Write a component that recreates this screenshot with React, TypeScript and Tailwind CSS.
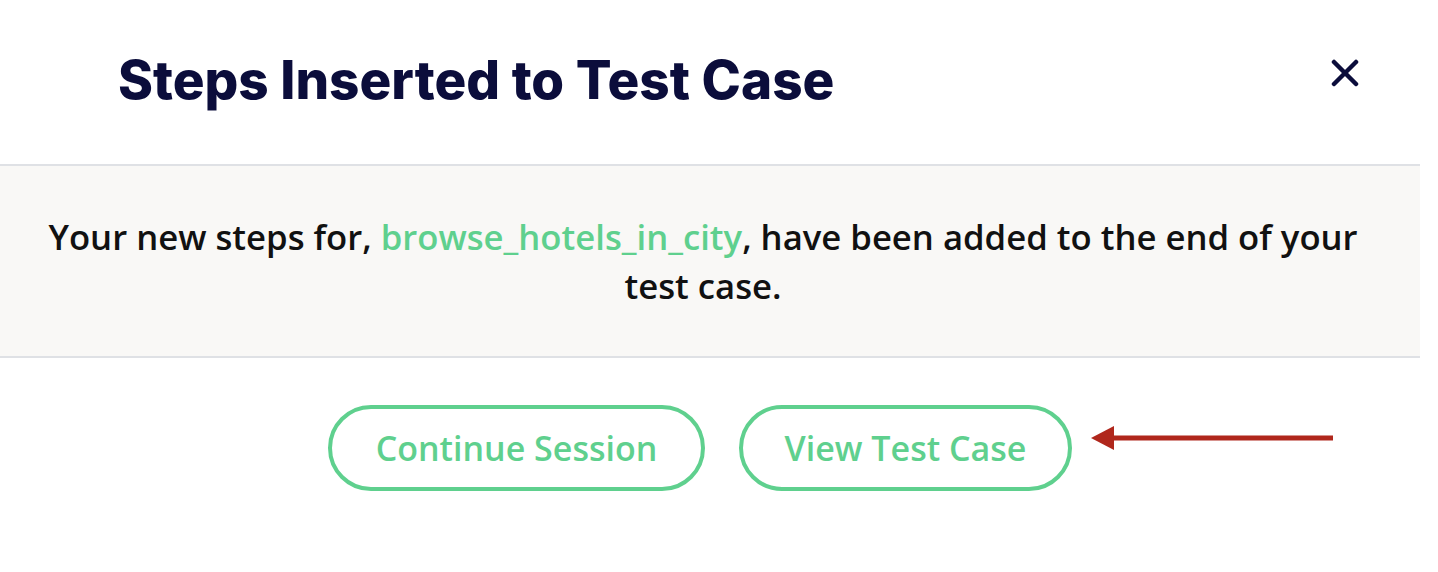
export default function App() {
  return (
    <div className="w-[1438px] h-[572px] bg-white overflow-hidden">
      <div className="w-[1420px]">
        <div className="h-[164px] flex items-start justify-between pl-[118px] pr-[60px]">
          <h1
            className="mt-[44px] text-[53px] leading-[72px] font-extrabold text-[#0b0d3b]"
            style={{ fontFamily: 'Inter, "Noto Sans", sans-serif' }}
          >
            Steps Inserted to Test Case
          </h1>
          <button className="mt-[58px] w-[30px] h-[30px] flex items-center justify-center text-[#0b0d3b]">
            <svg width="28" height="28" viewBox="0 0 28 28" fill="none" stroke="currentColor" strokeWidth="4.5" strokeLinecap="round">
              <line x1="3" y1="3" x2="25" y2="25" />
              <line x1="25" y1="3" x2="3" y2="25" />
            </svg>
          </button>
        </div>
        <div className="h-[194px] bg-[#f9f8f6] border-y-2 border-[#dfe1e5] flex items-center justify-center pl-2 pr-[22px]">
          <p
            className="text-center text-[34.7px] leading-[49px] font-semibold text-[#111111]"
            style={{ fontFamily: '"Open Sans", sans-serif' }}
          >
            Your new steps for, <span className="text-[#5fd08e]">browse_hotels_in_city</span>, have been added to the end of your
            <br />
            test case.
          </p>
        </div>
        <div className="pt-[47px] flex items-center justify-center gap-[34px] pr-[20px]" style={{ fontFamily: '"Open Sans", sans-serif' }}>
          <button className="h-[86px] w-[377px] rounded-full border-4 border-[#5fd08e] text-[#5fd08e] text-[34px] font-semibold">
            Continue Session
          </button>
          <div className="relative">
            <button className="h-[86px] w-[333px] rounded-full border-4 border-[#5fd08e] text-[#5fd08e] text-[34px] font-semibold">
              View Test Case
            </button>
            <svg className="absolute left-[352px] top-[20px]" width="245" height="26" viewBox="0 0 245 26">
              <polygon points="0,13 23,1 23,25" fill="#b0271c" />
              <rect x="20" y="10.5" width="222" height="5" fill="#b0271c" />
            </svg>
          </div>
        </div>
      </div>
    </div>
  );
}
